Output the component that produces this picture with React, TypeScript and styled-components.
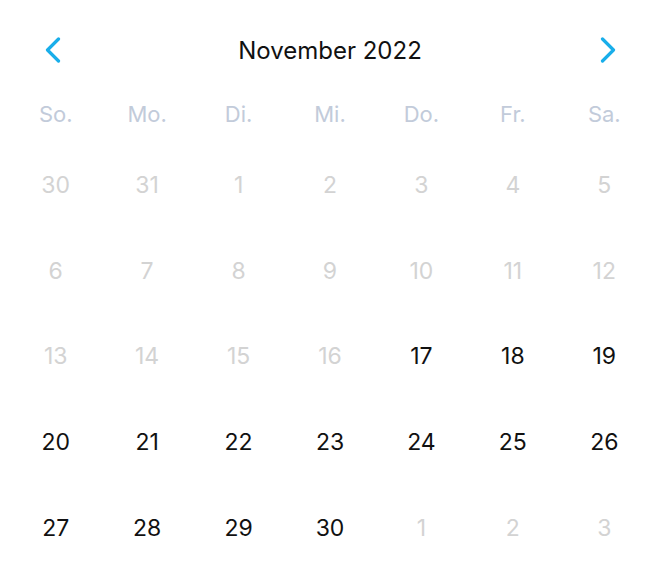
import styled, { createGlobalStyle } from 'styled-components'

const GlobalStyle = createGlobalStyle`
    body {
        margin: 0;
        background: #ffffff;
        font-family: Inter, "Noto Sans", sans-serif;
    }
`

const weekdays = ['So.', 'Mo.', 'Di.', 'Mi.', 'Do.', 'Fr.', 'Sa.']

type Day = { label: number; active: boolean }

const buildDays = (): Day[] => {
    const days: Day[] = []
    days.push({ label: 30, active: false }, { label: 31, active: false })
    for (let d = 1; d <= 30; d++) days.push({ label: d, active: d >= 17 })
    for (let d = 1; d <= 3; d++) days.push({ label: d, active: false })
    return days
}

const Chevron = ({ dir }: { dir: 'left' | 'right' }) => (
    <svg width="16" height="26" viewBox="0 0 16 26" fill="none">
        <polyline
            points={dir === 'left' ? '13.5,2 2.5,13 13.5,24' : '2.5,2 13.5,13 2.5,24'}
            stroke="#19aeea"
            strokeWidth="3.2"
            strokeLinecap="round"
            strokeLinejoin="round"
        />
    </svg>
)

export default function App() {
    const days = buildDays()
    return (
        <>
            <GlobalStyle />
            <Calendar>
                <Header>
                    <NavButton $side="left">
                        <Chevron dir="left" />
                    </NavButton>
                    <Title>November 2022</Title>
                    <NavButton $side="right">
                        <Chevron dir="right" />
                    </NavButton>
                </Header>
                <WeekRow>
                    {weekdays.map((w) => (
                        <Weekday key={w}>{w}</Weekday>
                    ))}
                </WeekRow>
                <DayGrid>
                    {days.map((d, i) => (
                        <DayCell key={i} $active={d.active}>
                            {d.label}
                        </DayCell>
                    ))}
                </DayGrid>
            </Calendar>
        </>
    )
}

const Calendar = styled.div`
    width: 640px;
    margin-left: 10px;
    display: flex;
    flex-direction: column;
`

const Header = styled.div`
    height: 100px;
    display: grid;
    grid-template-columns: 91.4px 1fr 91.4px;
    align-items: center;
`

const NavButton = styled.div<{ $side: 'left' | 'right' }>`
    display: flex;
    justify-content: ${(p) => (p.$side === 'left' ? 'flex-start' : 'flex-end')};
    padding: ${(p) => (p.$side === 'left' ? '0 0 0 35px' : '0 34px 0 0')};
    height: 26px;
`

const Title = styled.div`
    text-align: center;
    font-size: 24px;
    color: #111111;
`

const WeekRow = styled.div`
    height: 28px;
    display: grid;
    grid-template-columns: repeat(7, 1fr);
    align-items: center;
`

const Weekday = styled.div`
    text-align: center;
    font-size: 22px;
    color: #c2cbda;
`

const DayGrid = styled.div`
    margin-top: 14px;
    display: grid;
    grid-template-columns: repeat(7, 1fr);
    grid-auto-rows: 85.75px;
    align-items: center;
`

const DayCell = styled.div<{ $active: boolean }>`
    text-align: center;
    font-size: 23px;
    color: ${(p) => (p.$active ? '#111111' : '#d3d3d3')};
`
